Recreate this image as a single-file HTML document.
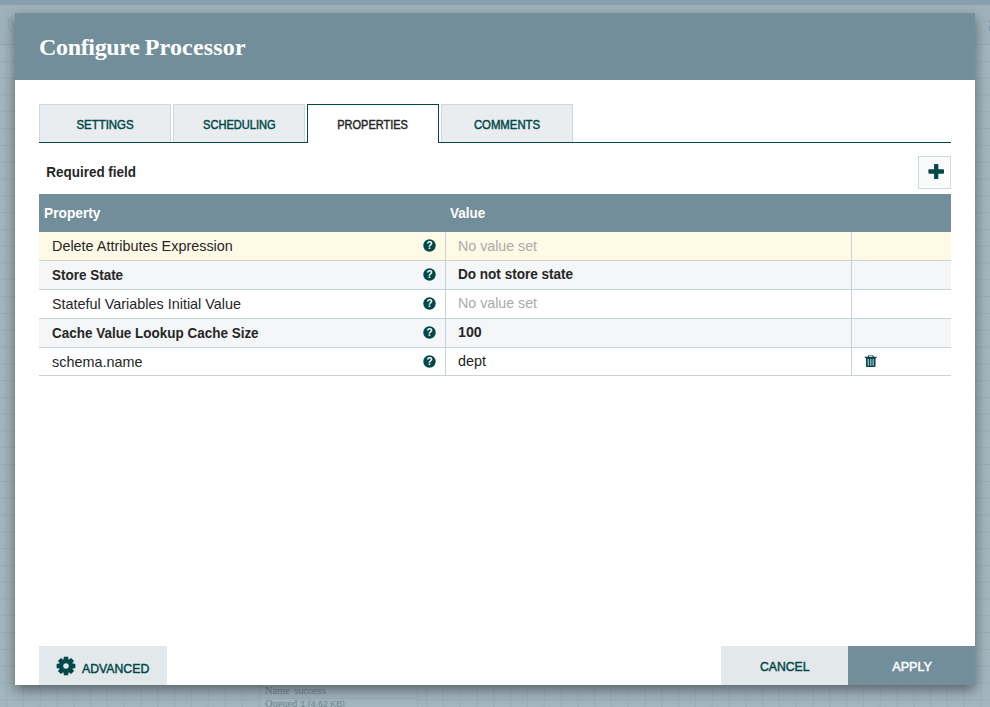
<!DOCTYPE html>
<html>
<head>
<meta charset="utf-8">
<title>Configure Processor</title>
<style>
html,body{margin:0;padding:0;}
body{width:990px;height:707px;overflow:hidden;position:relative;background:#a3b5be;font-family:"Liberation Sans",sans-serif;color:#262626;}
#topbar{position:absolute;left:0;top:0;width:990px;height:5px;background:#88a0ab;}
#toolbar{position:absolute;left:0;top:5px;width:990px;height:39px;background:#9fb2bb;}
#grid{position:absolute;left:0;top:44px;width:990px;height:663px;}
#conn{position:absolute;left:260px;top:684px;width:158px;height:30px;background:#a3b5be;border:1px solid #9aadb7;box-sizing:border-box;font-size:9.5px;color:#6f8792;}
#dialog{position:absolute;left:15px;top:13px;width:960px;height:672px;background:#fff;box-shadow:0 5px 12px rgba(0,0,0,0.45);}
#dhead{position:absolute;left:0;top:0;width:960px;height:67px;background:#728e9b;}
#dtitle{position:absolute;left:24px;top:20px;font-family:"Liberation Serif",serif;font-weight:bold;font-size:24px;line-height:28px;letter-spacing:0;word-spacing:-0.8px;color:#fff;white-space:nowrap;}
.tab{position:absolute;top:91px;width:130px;height:37px;border:1px solid #cfd8dc;border-bottom:none;background:#e9edf0;color:#004849;font-size:12px;-webkit-text-stroke:0.45px #004849;text-align:center;line-height:40px;}
.tab span{display:inline-block;transform-origin:50% 50%;}
.tab.sel{background:#fff;border:1px solid #004849;border-bottom:none;height:38px;color:#262626;-webkit-text-stroke:0.45px #262626;}
.tl{position:absolute;top:129px;height:1px;background:#004849;}
#req{transform:translateX(-0.7px) scaleX(0.935);transform-origin:0 50%;position:absolute;left:32px;top:150px;font-size:14.4px;font-weight:bold;line-height:18px;white-space:nowrap;}
#plus{position:absolute;left:903px;top:143px;width:31px;height:31px;border:1px solid #ccdadb;background:#f9fafb;}
#thead{position:absolute;left:24px;top:181px;width:912px;height:38px;background:#728e9b;color:#fff;font-weight:bold;font-size:14.4px;line-height:38px;}
#thead span{position:absolute;top:0;white-space:nowrap;transform:scaleX(0.935);transform-origin:0 50%;}
.row{position:absolute;left:24px;width:912px;font-size:14.4px;line-height:28px;border-bottom:1px solid #c7d2d7;}
.row .c1{position:absolute;left:0;top:0;width:406px;height:100%;border-right:1px solid #c7d2d7;}
.row .c2{position:absolute;left:407px;top:0;width:405px;height:100%;border-right:1px solid #c7d2d7;}
.row .t{position:absolute;left:13px;top:0;white-space:nowrap;}
.row .c2 .t{left:12px;}
.row.up .c2 .t{top:-1px;}
.unset{transform:scaleX(0.988);transform-origin:0 50%;}
.b{font-weight:bold;transform:scaleX(0.936);transform-origin:0 50%;}
.unset{color:#aaa;}
.q{position:absolute;left:384px;top:7px;width:13px;height:13px;}
.btn{position:absolute;top:633px;height:39px;line-height:39px;font-size:12.6px;-webkit-text-stroke:0.45px;color:#004849;background:#e3e8eb;white-space:nowrap;}
.btn span{position:absolute;top:2px;transform-origin:0 50%;}
</style>
</head>
<body>
<div id="topbar"></div>
<div id="toolbar"></div>
<svg id="grid" width="990" height="663">
 <defs><pattern id="gp" x="6.1" y="0.1" width="16.8" height="16.8" patternUnits="userSpaceOnUse">
  <path d="M0.5 0V16.8M0 0.5H16.8" stroke="#99acb6" stroke-width="1" fill="none"/></pattern></defs>
 <rect width="990" height="663" fill="url(#gp)"/>
</svg>
<div style="position:absolute;left:0;top:44px;width:990px;height:1px;background:#93a8b2"></div>
<svg style="position:absolute;left:0;top:5px" width="30" height="39" viewBox="0 5 30 39"><g fill="none" stroke="#8fa8b5" stroke-width="1.1"><circle cx="16.5" cy="24" r="8.3"/><circle cx="16.5" cy="24" r="4.8"/><path d="M6 16L20 33"/></g></svg>
<div style="position:absolute;left:988.5px;top:20px;width:2px;height:2.5px;background:#8a9fae"></div>
<div style="position:absolute;left:988.5px;top:25.7px;width:2px;height:5px;background:#7c98ab"></div>
<div id="conn"><span style="position:absolute;left:4px;top:0px;font-family:'Liberation Serif',serif;font-size:10.4px">Name</span><span style="position:absolute;left:33px;top:1px;font-size:8.8px">success</span><div style="position:absolute;left:0;top:13px;width:156px;height:1px;background:#9aadb7"></div><span style="position:absolute;left:4px;top:13px;font-family:'Liberation Serif',serif;font-size:10.4px">Queued</span><span style="position:absolute;left:39.5px;top:14px;font-size:8.8px">1 (4.62 KB)</span></div>
<div id="dialog">
 <div id="dhead"><div id="dtitle"><span style="letter-spacing:-0.34px">Configure</span> <span style="letter-spacing:0.17px">Processor</span></div></div>
 <div class="tab" style="left:24px"><span style="transform:scaleX(0.953)">SETTINGS</span></div>
 <div class="tab" style="left:158px"><span style="transform:scaleX(0.924)">SCHEDULING</span></div>
 <div class="tab sel" style="left:292px"><span style="transform:scaleX(0.916)">PROPERTIES</span></div>
 <div class="tab" style="left:426px"><span style="transform:scaleX(0.946)">COMMENTS</span></div>
 <div class="tl" style="left:24px;width:268px"></div>
 <div class="tl" style="left:424px;width:512px"></div>
 <div id="req">Required field</div>
 <div id="plus"><svg width="31" height="31" viewBox="0 0 31 31" style="position:absolute;left:0;top:0"><rect x="9.40" y="12.35" width="15.60" height="4.30" rx="0.9" fill="#004849"/><rect x="15.05" y="6.90" width="4.30" height="15.20" rx="0.9" fill="#004849"/></svg></div>
 <div id="thead"><span style="left:5.3px;transform:scaleX(0.955)">Property</span><span style="left:411px">Value</span></div>
 <div class="row" style="top:219px;height:28px;background:#fffae6"><div class="c1"><span class="t">Delete Attributes Expression</span><svg class="q" viewBox="0 0 13 13"><circle cx="6.5" cy="6.5" r="6.2" fill="#004849"/><text x="6.5" y="10.2" font-size="10" font-weight="bold" font-family="Liberation Sans, sans-serif" fill="#fff" text-anchor="middle">?</text></svg></div><div class="c2"><span class="t unset">No value set</span></div></div>
 <div class="row up" style="top:248px;height:28px;background:#f4f6f7"><div class="c1"><span class="t b">Store State</span><svg class="q" viewBox="0 0 13 13"><circle cx="6.5" cy="6.5" r="6.2" fill="#004849"/><text x="6.5" y="10.2" font-size="10" font-weight="bold" font-family="Liberation Sans, sans-serif" fill="#fff" text-anchor="middle">?</text></svg></div><div class="c2"><span class="t b" style="transform:scaleX(0.941)">Do not store state</span></div></div>
 <div class="row up" style="top:277px;height:28px;"><div class="c1"><span class="t" style="transform:translateY(-0.5px)">Stateful Variables Initial Value</span><svg class="q" viewBox="0 0 13 13"><circle cx="6.5" cy="6.5" r="6.2" fill="#004849"/><text x="6.5" y="10.2" font-size="10" font-weight="bold" font-family="Liberation Sans, sans-serif" fill="#fff" text-anchor="middle">?</text></svg></div><div class="c2"><span class="t unset">No value set</span></div></div>
 <div class="row up" style="top:306px;height:28px;background:#f4f6f7"><div class="c1"><span class="t b" style="transform:translateY(-0.5px) scaleX(0.936)">Cache Value Lookup Cache Size</span><svg class="q" viewBox="0 0 13 13"><circle cx="6.5" cy="6.5" r="6.2" fill="#004849"/><text x="6.5" y="10.2" font-size="10" font-weight="bold" font-family="Liberation Sans, sans-serif" fill="#fff" text-anchor="middle">?</text></svg></div><div class="c2"><span class="t b" style="transform:scaleX(0.985)">100</span></div></div>
 <div class="row up" style="top:335px;height:27px;"><div class="c1"><span class="t" style="transform:translateY(-0.5px)">schema.name</span><svg class="q" viewBox="0 0 13 13"><circle cx="6.5" cy="6.5" r="6.2" fill="#004849"/><text x="6.5" y="10.2" font-size="10" font-weight="bold" font-family="Liberation Sans, sans-serif" fill="#fff" text-anchor="middle">?</text></svg></div><div class="c2"><span class="t">dept</span></div>
  <svg style="position:absolute;left:825.1px;top:5.7px" width="13.5" height="13.8" viewBox="0 0 13 14" preserveAspectRatio="none"><path d="M4.3 1.2h4.4l0.8 1.6h2.7v1.3H0.8V2.8h2.7z M5 1.9l-0.4 0.9h3.8L8 1.9z" fill="#004849"/><path d="M1.9 4.1h9.2v8.2q0 1-1 1H2.9q-1 0-1-1z" fill="#004849"/><path d="M3.5 5.2h1.3v6.6H3.5zM5.85 5.2h1.3v6.6H5.85zM8.2 5.2h1.3v6.6H8.2z" fill="#9fb8c0"/></svg>
 </div>
 <div class="btn" style="left:24px;width:128px;"><svg style="position:absolute;left:16.8px;top:9.9px" width="20" height="20" viewBox="-10 -10 20 20"><path fill-rule="evenodd" fill="#004849" stroke="#004849" stroke-width="0.5" stroke-linejoin="round" d="M-2.17 -6.55 L-1.98 -9.09 L1.98 -9.09 L2.17 -6.55 L3.10 -6.17 L5.02 -7.83 L7.83 -5.02 L6.17 -3.10 L6.55 -2.17 L9.09 -1.98 L9.09 1.98 L6.55 2.17 L6.17 3.10 L7.83 5.02 L5.02 7.83 L3.10 6.17 L2.17 6.55 L1.98 9.09 L-1.98 9.09 L-2.17 6.55 L-3.10 6.17 L-5.02 7.83 L-7.83 5.02 L-6.17 3.10 L-6.55 2.17 L-9.09 1.98 L-9.09 -1.98 L-6.55 -2.17 L-6.17 -3.10 L-7.83 -5.02 L-5.02 -7.83 L-3.10 -6.17Z M3.05 0A3.05 3.05 0 1 0 -3.05 0A3.05 3.05 0 1 0 3.05 0Z"/></svg><span style="left:42.5px;top:4px;transform:scaleX(0.974)">ADVANCED</span></div>
 <div class="btn" style="left:706px;width:127px;"><span style="left:38.5px;transform:scaleX(0.97)">CANCEL</span></div>
 <div class="btn" style="left:833px;width:127px;background:#728e9b;color:#fff"><span style="left:44.3px">APPLY</span></div>
</div>
</body>
</html>
